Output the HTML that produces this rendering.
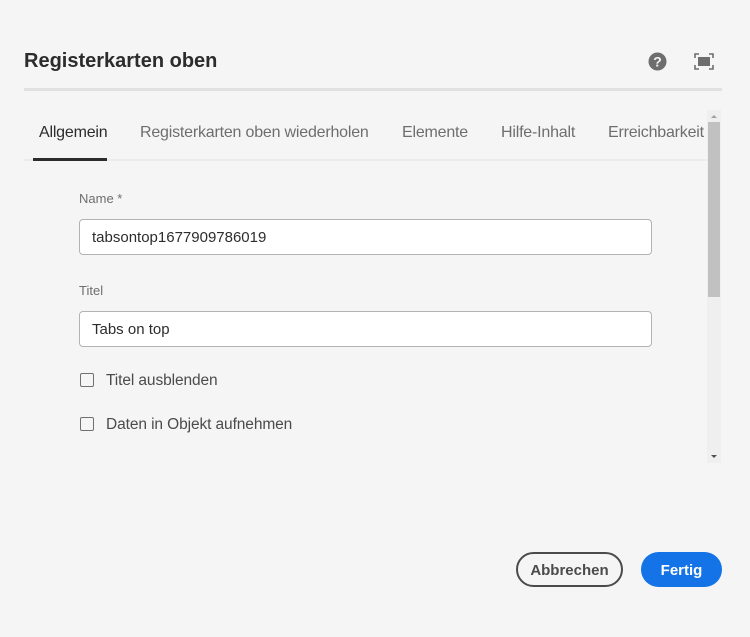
<!DOCTYPE html>
<html><head><style>
body{margin:0;width:750px;height:637px;background:#f5f5f5;font-family:"Liberation Sans",sans-serif;position:relative;overflow:hidden}
.a{position:absolute}
.title{left:24px;top:50px;font-size:20px;font-weight:bold;color:#2c2c2c;letter-spacing:0}
.tab{top:124px;font-size:16px;color:#6e6e6e;letter-spacing:-0.2px}
.lbl{font-size:13px;color:#6e6e6e;left:79px}
.inp{left:79px;width:571px;height:34px;background:#fff;border:1px solid #b3b3b3;border-radius:4px;box-sizing:content-box}
.inp span{position:absolute;left:12px;top:9px;font-size:15px;color:#2c2c2c}
.cb{left:80px;width:12px;height:12px;border:1.5px solid #707070;border-radius:2px}
.cbl{left:106px;font-size:15.5px;color:#4b4b4b;letter-spacing:-0.1px}
.btn{border-radius:18px;height:35px;font-weight:bold;font-size:15px;text-align:center;line-height:37px;box-sizing:border-box}
</style></head><body>
<div class="a title">Registerkarten oben</div>
<svg class="a" style="left:648px;top:52px" width="19" height="19" viewBox="0 0 19 19"><circle cx="9.5" cy="9.5" r="9" fill="#6e6e6e"/><text x="9.5" y="14.5" font-size="14" font-weight="bold" fill="#f5f5f5" text-anchor="middle" font-family="Liberation Sans">?</text></svg>
<svg class="a" style="left:694px;top:53px" width="20" height="17" viewBox="0 0 20 17"><path d="M1 5V1h4M15 1h4v4M19 12v4h-4M5 16H1v-4" fill="none" stroke="#6e6e6e" stroke-width="1.6"/><rect x="4" y="4" width="12" height="9" fill="#6e6e6e"/></svg>
<div class="a" style="left:24px;top:88px;width:698px;height:3px;background:#e1e1e1"></div>
<div class="a tab" style="left:39px;color:#2c2c2c">Allgemein</div>
<div class="a tab" style="left:140px">Registerkarten oben wiederholen</div>
<div class="a tab" style="left:402px">Elemente</div>
<div class="a tab" style="left:501px">Hilfe-Inhalt</div>
<div class="a tab" style="left:608px">Erreichbarkeit</div>
<div class="a" style="left:24px;top:159px;width:683px;height:2px;background:#ebebeb"></div>
<div class="a" style="left:33px;top:158px;width:74px;height:3px;background:#2c2c2c"></div>
<div class="a" style="left:707px;top:110px;width:14px;height:353px;background:#efefef"></div>
<div class="a" style="left:708px;top:122px;width:12px;height:175px;background:#c1c1c1"></div>
<div class="a" style="left:711px;top:115px;width:0;height:0;border:3px solid transparent;border-bottom-color:#a0a0a0;border-top:0"></div>
<div class="a" style="left:711px;top:455px;width:0;height:0;border:3px solid transparent;border-top-color:#505050;border-bottom:0"></div>
<div class="a lbl" style="top:191px">Name *</div>
<div class="a inp" style="top:219px"><span>tabsontop1677909786019</span></div>
<div class="a lbl" style="top:283px">Titel</div>
<div class="a inp" style="top:311px"><span>Tabs on top</span></div>
<div class="a cb" style="top:373px"></div><div class="a cbl" style="top:372px">Titel ausblenden</div>
<div class="a cb" style="top:417px"></div><div class="a cbl" style="top:416px">Daten in Objekt aufnehmen</div>
<div class="a btn" style="left:516px;top:552px;width:107px;border:2px solid #4b4b4b;color:#4b4b4b;line-height:33px">Abbrechen</div>
<div class="a btn" style="left:641px;top:552px;width:81px;background:#1473e6;color:#fff">Fertig</div>
</body></html>
